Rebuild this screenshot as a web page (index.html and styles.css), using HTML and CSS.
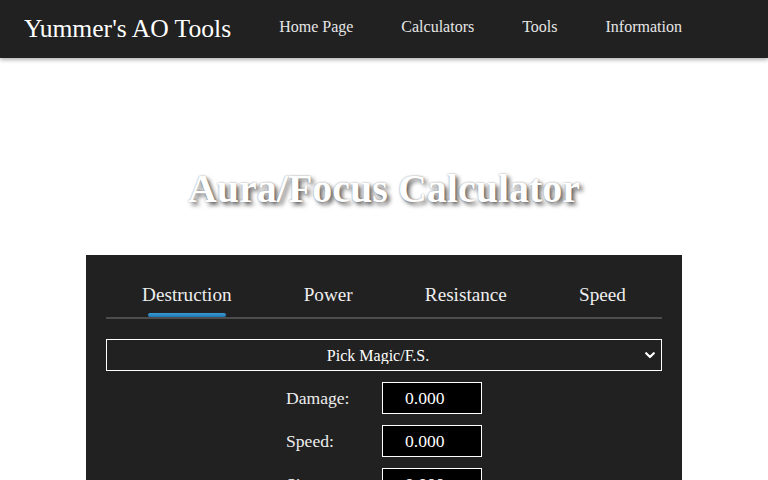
FILE: index.html
```html
<!DOCTYPE html>
<html lang="en">
<head>
<meta charset="utf-8">
<title>Aura/Focus Calculator</title>
<link rel="stylesheet" href="styles.css">
</head>
<body>
<header class="topbar">
  <div class="brand">Yummer's AO Tools</div>
  <nav class="nav">
    <a class="nav-link" href="#">Home Page</a>
    <a class="nav-link" href="#">Calculators</a>
    <a class="nav-link" href="#">Tools</a>
    <a class="nav-link" href="#">Information</a>
  </nav>
</header>
<main class="main">
  <h1 class="page-title">Aura/Focus Calculator</h1>
  <section class="card">
    <div class="tabs">
      <div class="tab active">Destruction</div>
      <div class="tab">Power</div>
      <div class="tab">Resistance</div>
      <div class="tab">Speed</div>
    </div>
    <div class="select-wrap">
      <select class="picker">
        <option>Pick Magic/F.S.</option>
      </select>
      <svg class="chevron" width="10" height="7" viewBox="0 0 10 7"><path d="M1.2 1.2 L5 5 L8.8 1.2" fill="none" stroke="#fff" stroke-width="2.2" stroke-linecap="round" stroke-linejoin="round"/></svg>
    </div>
    <div class="form">
      <label class="lbl">Damage:</label>
      <input class="num" type="text" value="0.000">
      <label class="lbl">Speed:</label>
      <input class="num" type="text" value="0.000">
      <label class="lbl">Size:</label>
      <input class="num" type="text" value="0.000">
    </div>
  </section>
</main>
</body>
</html>
```

FILE: styles.css
```css
html, body {
  margin: 0;
  padding: 0;
  background: #ffffff;
  font-family: "Liberation Serif", "Times New Roman", serif;
}

.topbar {
  height: 58px;
  background: #212121;
  display: flex;
  align-items: center;
  box-shadow: 0 2px 4px rgba(0, 0, 0, 0.3);
  position: relative;
  z-index: 1;
}

.brand {
  font-size: 25.6px;
  color: #ffffff;
  padding-left: 24px;
  margin-right: 24px;
  white-space: nowrap;
}

.nav {
  display: flex;
  padding-bottom: 5px;
}

.nav-link {
  color: #e6e6e6;
  font-size: 16px;
  text-decoration: none;
  padding: 0 24px;
  white-space: nowrap;
}

.main {
  padding-top: 108px;
}

.page-title {
  margin: 0 0 43px;
  text-align: center;
  font-size: 40px;
  line-height: 46px;
  font-weight: bold;
  color: #ffffff;
  text-shadow: 3px 3px 4px rgba(0, 0, 0, 0.6), 0 0 2px rgba(0, 0, 0, 0.4);
}

.card {
  width: 556px;
  margin: 0 auto;
  background: #212121;
  padding: 29px 20px 20px;
}

.tabs {
  display: flex;
  justify-content: space-around;
  border-bottom: 2px solid #4d4d4d;
}

.tab {
  position: relative;
  color: #eeeeee;
  font-size: 19.2px;
  line-height: 22px;
  padding-bottom: 11px;
}

.tab.active::after {
  content: "";
  position: absolute;
  left: 6px;
  right: 6px;
  bottom: 0;
  height: 4px;
  border-radius: 2px;
  background: linear-gradient(#3a9ad6, #1f78b0);
}

.select-wrap {
  position: relative;
  margin-top: 20px;
}

.picker {
  display: block;
  width: 100%;
  height: 32px;
  box-sizing: border-box;
  -webkit-appearance: none;
  appearance: none;
  background: #212121;
  color: #ffffff;
  border: 1px solid #ffffff;
  border-radius: 0;
  font-family: "Liberation Serif", "Times New Roman", serif;
  font-size: 16px;
  padding: 0 16px 0 4px;
  text-align: center;
  text-align-last: center;
}

.chevron {
  position: absolute;
  right: 7px;
  top: 13px;
  pointer-events: none;
}

.form {
  display: grid;
  grid-template-columns: 96px 100px;
  row-gap: 11px;
  justify-content: center;
  align-items: center;
  margin-top: 11px;
}

.lbl {
  color: #eeeeee;
  font-size: 17.6px;
}

.num {
  width: 100px;
  height: 32px;
  box-sizing: border-box;
  background: #000000;
  color: #ffffff;
  border: 1px solid #ffffff;
  border-radius: 0;
  font-family: "Liberation Serif", "Times New Roman", serif;
  font-size: 17.6px;
  padding: 0 0 0 22px;
  outline: none;
}
```
